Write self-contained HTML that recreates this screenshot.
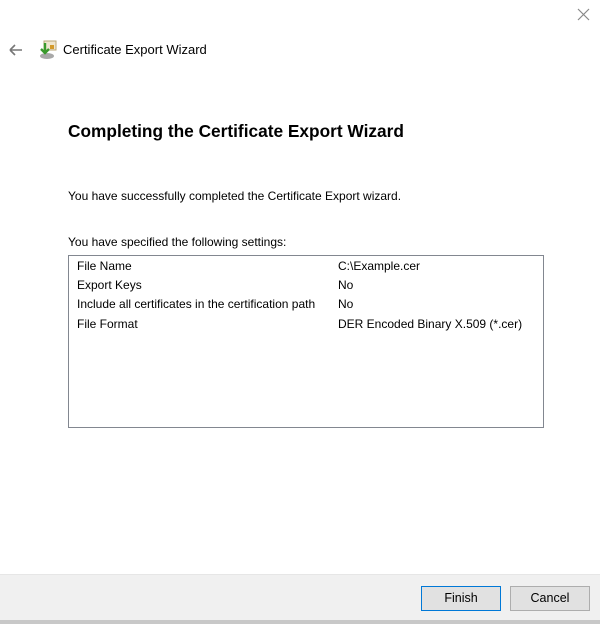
<!DOCTYPE html>
<html><head><style>
html,body{margin:0;padding:0;}
body{width:600px;height:624px;background:#fff;position:relative;overflow:hidden;font-family:"Liberation Sans",sans-serif;color:#000;}
.a{position:absolute;white-space:nowrap;}
.t{font-size:12px;}
.box{position:absolute;left:68px;top:255px;width:474px;height:171px;border:1px solid #828790;}
.foot{position:absolute;left:0;top:574px;width:600px;height:46px;background:#f0f0f0;border-top:1px solid #e6e6e6;}
.btn{position:absolute;top:586px;width:78px;height:23px;border:1px solid #adadad;background:#e1e1e1;font-size:12.5px;text-align:center;line-height:23px;}
</style></head><body>
<svg class="a" style="left:577px;top:8px" width="13" height="13"><path d="M1 1L12 12M12 1L1 12" stroke="#888" stroke-width="1.2"/></svg>
<svg class="a" style="left:9px;top:44px" width="14" height="12"><path d="M1 6H13M1 6L6 1M1 6L6 11" stroke="#777" stroke-width="1.6" fill="none"/></svg>
<svg class="a" style="left:38px;top:40px" width="20" height="20">
<rect x="6" y="1" width="12" height="9" fill="#efe6cf" stroke="#b9a77a"/>
<rect x="12" y="5" width="4" height="4" fill="#d39a2a"/>
<ellipse cx="9" cy="16" rx="7" ry="3" fill="#a8a8a8"/>
<path d="M7 3V12M3 9L7 13L11 9" stroke="#3a9a2c" stroke-width="2.4" fill="none"/>
</svg>
<div class="a" style="left:63px;top:42px;font-size:13px;">Certificate Export Wizard</div>
<div class="a" style="left:68px;top:121px;font-size:17.3px;font-weight:bold;">Completing the Certificate Export Wizard</div>
<div class="a t" style="left:68px;top:189px;">You have successfully completed the Certificate Export wizard.</div>
<div class="a t" style="left:68px;top:235px;">You have specified the following settings:</div>
<div class="box"></div>
<div class="a t" style="left:77px;top:259px;">File Name</div>
<div class="a t" style="left:77px;top:278px;">Export Keys</div>
<div class="a t" style="left:77px;top:297px;">Include all certificates in the certification path</div>
<div class="a t" style="left:77px;top:317px;">File Format</div>
<div class="a t" style="left:338px;top:259px;">C:\Example.cer</div>
<div class="a t" style="left:338px;top:278px;">No</div>
<div class="a t" style="left:338px;top:297px;">No</div>
<div class="a t" style="left:338px;top:317px;">DER Encoded Binary X.509 (*.cer)</div>
<div class="foot"></div>
<div class="btn" style="left:421px;border-color:#0078d7;">Finish</div>
<div class="btn" style="left:510px;">Cancel</div>
<div class="a" style="left:0;top:620px;width:600px;height:4px;background:#c8c8c8;"></div>
</body></html>
